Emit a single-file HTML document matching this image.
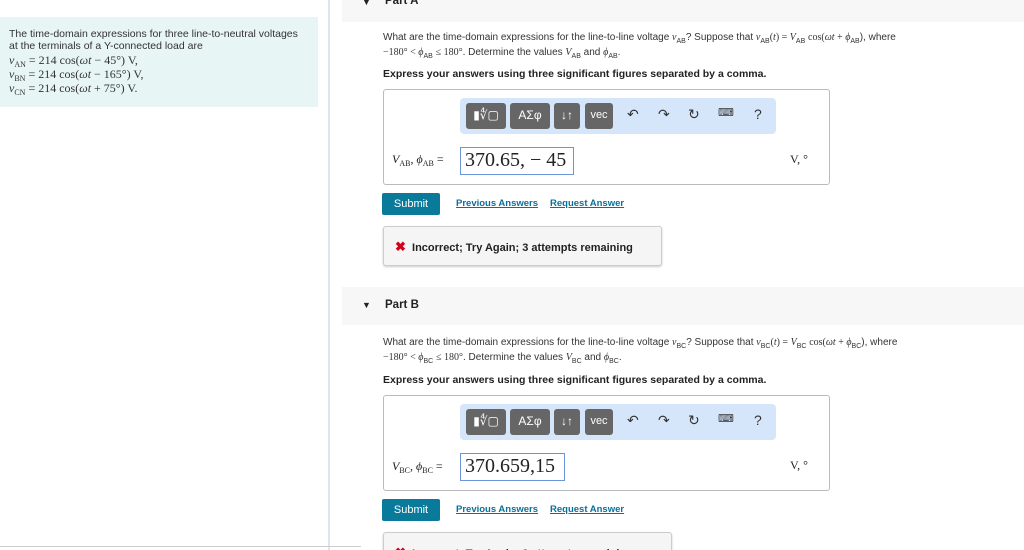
<!DOCTYPE html>
<html><head><style>
html,body{margin:0;width:1024px;height:550px;overflow:hidden}
body{background:#fff;font-family:"Liberation Sans",sans-serif;position:relative;color:#222}
sub{line-height:0;vertical-align:-3px}
.a{position:absolute}
.m{font-family:"Liberation Serif",serif}
.left{left:0;top:17px;width:318px;height:90px;background:#e8f5f5;font-size:10.5px;line-height:12px;color:#333;padding:11px 0 0 9px;box-sizing:border-box}
.band{background:#f7f7f7;left:342px;width:682px}
.ptitle{font-size:11.5px;font-weight:bold;color:#222}
.q{font-size:10px;color:#333;line-height:15px}
.box{border:1px solid #bbb;border-radius:3px;background:#fff;box-sizing:border-box}
.tb{background:#d6e6fa;border-radius:4px}
.btn{background:#666;border-radius:3px;color:#fff;font-size:12px;text-align:center;line-height:24px;top:5px;height:26px}
.ic{font-size:14px;color:#333;top:8px}
.inp{border:1px solid #6d96d8;font-family:"Liberation Serif",serif;font-size:20px;line-height:25px;padding-left:4px;box-sizing:border-box}
.sub{background:#0a7a9b;color:#fff;font-size:11px;text-align:center;line-height:22px;border-radius:2px;width:58px;height:22px}
.lk{color:#0a6f9b;font-size:9.5px;font-weight:bold;text-decoration:underline}
.inc{background:#f5f5f5;border:1px solid #ccc;border-radius:3px;box-shadow:0 1px 2px #ccc;font-size:11px;font-weight:bold;color:#222;box-sizing:border-box}
</style></head><body>
<div class="a" style="left:328px;top:0;width:2px;height:550px;background:#dde6f0"></div>
<div class="a" style="left:0;top:546px;width:361px;height:1px;background:#ccc"></div>
<div class="a left">The time-domain expressions for three line-to-neutral voltages<br>at the terminals of a Y-connected load are<br>
<div class="m" style="font-size:12px;line-height:14px;margin-top:1px"><i>v</i><sub style="font-size:8px">AN</sub> = 214 cos(<i>ωt</i> − 45°) V,<br><i>v</i><sub style="font-size:8px">BN</sub> = 214 cos(<i>ωt</i> − 165°) V,<br><i>v</i><sub style="font-size:8px">CN</sub> = 214 cos(<i>ωt</i> + 75°) V.</div></div>

<div class="a band" style="top:0;height:22px"></div>
<div class="a" style="left:362px;top:-3px;font-size:9px">▼</div>
<div class="a ptitle" style="left:385px;top:-5px">Part A</div>
<div class="a q" style="left:383px;top:30px">What are the time-domain expressions for the line-to-line voltage <i class="m">v</i><sub style="font-size:7px">AB</sub>? Suppose that <i class="m">v</i><sub style="font-size:7px">AB</sub><span class="m">(<i>t</i>) = <i>V</i></span><sub style="font-size:7px">AB</sub> <span class="m">cos(<i>ωt</i> + <i>ϕ</i></span><sub style="font-size:7px">AB</sub>), where<br><span class="m">−180° &lt; <i>ϕ</i></span><sub style="font-size:7px">AB</sub> <span class="m">≤ 180°</span>. Determine the values <i class="m">V</i><sub style="font-size:7px">AB</sub> and <i class="m">ϕ</i><sub style="font-size:7px">AB</sub>.</div>
<div class="a" style="left:383px;top:68px;font-size:10.5px;font-weight:bold">Express your answers using three significant figures separated by a comma.</div>

<div class="a box" style="left:383px;top:89px;width:447px;height:96px"></div>
<div class="a tb" style="left:460px;top:98px;width:316px;height:36px">
<div class="a btn" style="left:6px;width:40px">▮∜▢</div><div class="a btn" style="left:50px;width:40px">ΑΣφ</div><div class="a btn" style="left:94px;width:26px">↓↑</div><div class="a btn" style="left:125px;width:28px;font-size:11px">vec</div>
<div class="a ic" style="left:167px">↶</div><div class="a ic" style="left:198px">↷</div><div class="a ic" style="left:228px">↻</div><div class="a ic" style="left:258px;font-size:11px">⌨</div><div class="a ic" style="left:294px">?</div></div>
<div class="a m" style="left:392px;top:152px;font-size:12px"><i>V</i><sub style="font-size:8px">AB</sub>, <i>ϕ</i><sub style="font-size:8px">AB</sub> =</div>
<div class="a inp" style="left:460px;top:147px;width:114px;height:28px">370.65, − 45</div>
<div class="a m" style="left:790px;top:152px;font-size:12px">V, °</div>
<div class="a sub" style="left:382px;top:193px">Submit</div>
<div class="a lk" style="left:456px;top:198px">Previous Answers</div><div class="a lk" style="left:550px;top:198px">Request Answer</div>
<div class="a inc" style="left:383px;top:226px;width:279px;height:40px;padding:12px 0 0 11px"><span style="color:#d0021b;font-size:13px">✖</span>&nbsp; Incorrect; Try Again; 3 attempts remaining</div>

<div class="a band" style="top:287px;height:38px"></div>
<div class="a" style="left:362px;top:300px;font-size:9px">▼</div>
<div class="a ptitle" style="left:385px;top:299px">Part B</div>
<div class="a q" style="left:383px;top:335px">What are the time-domain expressions for the line-to-line voltage <i class="m">v</i><sub style="font-size:7px">BC</sub>? Suppose that <i class="m">v</i><sub style="font-size:7px">BC</sub><span class="m">(<i>t</i>) = <i>V</i></span><sub style="font-size:7px">BC</sub> <span class="m">cos(<i>ωt</i> + <i>ϕ</i></span><sub style="font-size:7px">BC</sub>), where<br><span class="m">−180° &lt; <i>ϕ</i></span><sub style="font-size:7px">BC</sub> <span class="m">≤ 180°</span>. Determine the values <i class="m">V</i><sub style="font-size:7px">BC</sub> and <i class="m">ϕ</i><sub style="font-size:7px">BC</sub>.</div>
<div class="a" style="left:383px;top:374px;font-size:10.5px;font-weight:bold">Express your answers using three significant figures separated by a comma.</div>

<div class="a box" style="left:383px;top:395px;width:447px;height:96px"></div>
<div class="a tb" style="left:460px;top:404px;width:316px;height:36px">
<div class="a btn" style="left:6px;width:40px">▮∜▢</div><div class="a btn" style="left:50px;width:40px">ΑΣφ</div><div class="a btn" style="left:94px;width:26px">↓↑</div><div class="a btn" style="left:125px;width:28px;font-size:11px">vec</div>
<div class="a ic" style="left:167px">↶</div><div class="a ic" style="left:198px">↷</div><div class="a ic" style="left:228px">↻</div><div class="a ic" style="left:258px;font-size:11px">⌨</div><div class="a ic" style="left:294px">?</div></div>
<div class="a m" style="left:392px;top:459px;font-size:12px"><i>V</i><sub style="font-size:8px">BC</sub>, <i>ϕ</i><sub style="font-size:8px">BC</sub> =</div>
<div class="a inp" style="left:460px;top:453px;width:105px;height:28px">370.659,15</div>
<div class="a m" style="left:790px;top:458px;font-size:12px">V, °</div>
<div class="a sub" style="left:382px;top:499px">Submit</div>
<div class="a lk" style="left:456px;top:504px">Previous Answers</div><div class="a lk" style="left:550px;top:504px">Request Answer</div>
<div class="a inc" style="left:383px;top:532px;width:289px;height:40px;padding:12px 0 0 11px"><span style="color:#d0021b;font-size:13px">✖</span>&nbsp; Incorrect; Try Again; 2 attempts remaining</div>
</body></html>
